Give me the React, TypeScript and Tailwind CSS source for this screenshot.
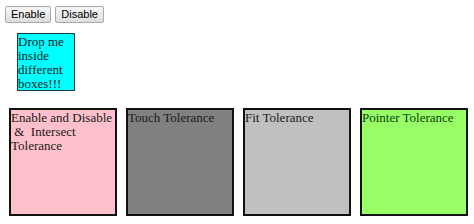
import React from "react";

const serif = { fontFamily: '"Liberation Serif", "Times New Roman", serif' };

function Btn({ children }: { children: React.ReactNode }) {
  return (
    <button
      className="h-[17px] px-[5px] text-[11px] leading-[15px] text-black border border-[#a9a9a9] rounded-[2px] bg-gradient-to-b from-[#f8f8f8] to-[#dddddd]"
      style={{ fontFamily: '"Liberation Sans", Arial, sans-serif' }}
    >
      {children}
    </button>
  );
}

function Box({ bg, children }: { bg: string; children: React.ReactNode }) {
  return (
    <div
      className={`w-[108px] h-[108px] border-2 border-[#111] text-[13px] leading-[14px] text-[#1a1a1a] ${bg}`}
      style={serif}
    >
      {children}
    </div>
  );
}

export default function App() {
  return (
    <div className="w-[474px] h-[224px] bg-white pt-[6px] overflow-hidden">
      <div className="flex gap-[4px] pl-[5px]">
        <Btn>Enable</Btn>
        <Btn>Disable</Btn>
      </div>
      <div
        className="ml-[17px] mt-[10px] w-[58px] h-[58px] border border-[#1d3b3b] bg-[#00ffff] text-[13px] leading-[14px] text-[#1a1a1a] pt-[1px]"
        style={serif}
      >
        Drop me inside different boxes!!!
      </div>
      <div className="flex gap-[9px] pl-[9px] mt-[17px]">
        <Box bg="bg-[#ffc0cb]">
          <div className="pt-[1px]">Enable and Disable</div>
          <div>{"\u00a0&\u00a0 Intersect"}</div>
          <div>Tolerance</div>
        </Box>
        <Box bg="bg-[#808080]">
          <div className="pt-[1px]">Touch Tolerance</div>
        </Box>
        <Box bg="bg-[#c0c0c0]">
          <div className="pt-[1px]">Fit Tolerance</div>
        </Box>
        <Box bg="bg-[#99ff66]">
          <div className="pt-[1px] text-[#0d3d0d]">Pointer Tolerance</div>
        </Box>
      </div>
    </div>
  );
}
